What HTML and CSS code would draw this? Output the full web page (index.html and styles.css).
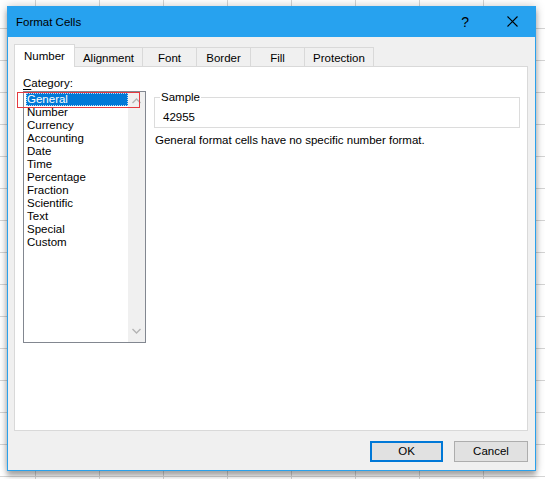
FILE: index.html
```html
<!DOCTYPE html>
<html lang="en">
<head>
<meta charset="utf-8">
<title>Format Cells</title>
<link rel="stylesheet" href="styles.css">
</head>
<body>
<div class="dialog">
  <div class="titlebar">
    <span class="title">Format Cells</span>
    <span class="help">?</span>
    <svg class="close" width="11" height="11" viewBox="0 0 11 11"><path d="M0.5 0.5 L10.5 10.5 M10.5 0.5 L0.5 10.5" stroke="#000" stroke-width="1.1" fill="none"/></svg>
  </div>
  <div class="body">
    <div class="tabs">
      <div class="tab active">Number</div>
      <div class="tab">Alignment</div>
      <div class="tab">Font</div>
      <div class="tab">Border</div>
      <div class="tab">Fill</div>
      <div class="tab">Protection</div>
    </div>
    <div class="panel">
      <div class="left">
        <div class="label"><u>C</u>ategory:</div>
        <div class="listbox">
          <div class="items">
            <div class="item selected">General</div>
            <div class="item">Number</div>
            <div class="item">Currency</div>
            <div class="item">Accounting</div>
            <div class="item">Date</div>
            <div class="item">Time</div>
            <div class="item">Percentage</div>
            <div class="item">Fraction</div>
            <div class="item">Scientific</div>
            <div class="item">Text</div>
            <div class="item">Special</div>
            <div class="item">Custom</div>
          </div>
          <div class="scrollbar">
            <svg width="9" height="6" viewBox="0 0 9 6"><path d="M0.5 5 L4.5 1 L8.5 5" stroke="#b4b4b4" stroke-width="1.4" fill="none"/></svg>
            <svg width="9" height="6" viewBox="0 0 9 6"><path d="M0.5 1 L4.5 5 L8.5 1" stroke="#b4b4b4" stroke-width="1.4" fill="none"/></svg>
          </div>
          <div class="annotation"></div>
        </div>
      </div>
      <div class="right">
        <fieldset class="sample">
          <legend>Sample</legend>
          <div class="sample-value">42955</div>
        </fieldset>
        <p class="desc">General format cells have no specific number format.</p>
      </div>
    </div>
    <div class="buttons">
      <button class="btn default">OK</button>
      <button class="btn">Cancel</button>
    </div>
  </div>
</div>
</body>
</html>
```

FILE: styles.css
```css
html, body {
  margin: 0;
  padding: 0;
  height: 479px;
  overflow: hidden;
}
body {
  background-color: #ffffff;
  background-image:
    repeating-linear-gradient(to right, transparent 0, transparent 35px, #d4d4d4 35px, #d4d4d4 36px, transparent 36px, transparent 64px),
    repeating-linear-gradient(to bottom, transparent 0, transparent 28px, #d4d4d4 28px, #d4d4d4 29px, transparent 29px, transparent 32px);
  font-family: "Liberation Sans", Arial, sans-serif;
  font-size: 11.5px;
  color: #000;
  padding-top: 6px;
  padding-left: 7px;
  box-sizing: border-box;
}
.dialog {
  width: 529px;
  height: 465px;
  box-sizing: border-box;
  border: 1px solid #2aa1ec;
  background: #f0f0f0;
  box-shadow: 0 0 9px rgba(0,0,0,0.22), 0 5px 5px rgba(0,0,0,0.28);
  display: flex;
  flex-direction: column;
}
.titlebar {
  height: 30px;
  background: #27a2ef;
  display: flex;
  align-items: center;
  padding-left: 8px;
  padding-right: 17px;
  flex-shrink: 0;
}
.title {
  flex: 1;
  font-size: 11.5px;
  padding-bottom: 1px;
}
.help {
  font-size: 14px;
  margin-right: 38px;
  padding-bottom: 1px;
}
.close {
  margin-top: -1px;
}
.body {
  flex: 1;
  display: flex;
  flex-direction: column;
  padding: 7px 7px 0 6px;
}
.tabs {
  display: flex;
  align-items: flex-end;
  height: 22px;
  position: relative;
  z-index: 1;
}
.tab {
  height: 19px;
  box-sizing: border-box;
  min-width: 54px;
  padding: 1px 8px 0;
  border: 1px solid #d9d9d9;
  border-bottom: none;
  border-left: none;
  display: flex;
  align-items: center;
  justify-content: center;
  background: #f0f0f0;
}
.tab.active {
  height: 23px;
  margin-bottom: -1px;
  background: #fff;
  border-left: 1px solid #d9d9d9;
  padding: 0 9px 1px;
}
.panel {
  height: 365px;
  box-sizing: border-box;
  background: #fff;
  border: 1px solid #d9d9d9;
  display: flex;
  padding: 9px 7px 0 8px;
}
.left {
  width: 123px;
  flex-shrink: 0;
}
.label {
  line-height: 14px;
  height: 15px;
}
.label u {
  text-decoration-thickness: 1px;
  text-underline-offset: 2px;
}
.listbox {
  position: relative;
  width: 123px;
  height: 252px;
  box-sizing: border-box;
  border: 1px solid #828790;
  display: flex;
  padding: 1px 0 1px 2px;
}
.items {
  flex: 1;
}
.item {
  height: 13px;
  line-height: 13px;
  padding-left: 1px;
  box-sizing: border-box;
  white-space: nowrap;
}
.item.selected {
  background: #0078d7;
  color: #fff;
  outline: 1px dotted rgba(255,255,255,0.75);
  outline-offset: -1px;
}
.scrollbar {
  width: 17px;
  margin: -1px 0 -1px 0;
  background: #f0f0f0;
  display: flex;
  flex-direction: column;
  justify-content: space-between;
  align-items: center;
  padding: 6px 0 8px 0;
  box-sizing: border-box;
}
.annotation {
  position: absolute;
  z-index: 2;
  left: -7px;
  top: 0;
  width: 123px;
  height: 16px;
  box-sizing: border-box;
  border: 1px solid #e53a40;
}
.right {
  flex: 1;
  padding-left: 8px;
  padding-top: 14px;
}
.sample {
  margin: 0;
  padding: 6px 0 3px 5px;
  border: 1px solid #dcdcdc;
  min-width: 0;
}
.sample legend {
  padding: 0 1px;
  line-height: 14px;
}
.sample-value {
  padding-left: 3px;
  line-height: 14px;
}
.desc {
  margin: 5px 0 0 1px;
  line-height: 14px;
}
.buttons {
  display: flex;
  justify-content: flex-end;
  gap: 11px;
  margin-top: 10px;
}
.btn {
  width: 74px;
  height: 21px;
  box-sizing: border-box;
  border: 1px solid #adadad;
  background: #e1e1e1;
  font-family: inherit;
  font-size: 11.5px;
  color: #000;
  padding: 0 0 1px 0;
}
.btn.default {
  border: 2px solid #0078d7;
  width: 73px;
}
```
